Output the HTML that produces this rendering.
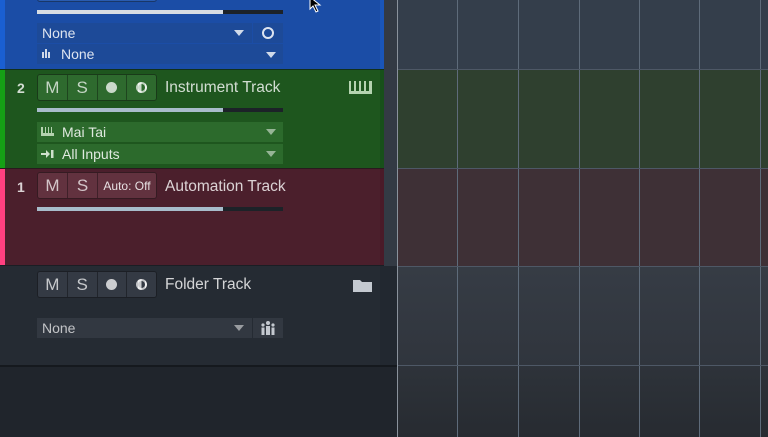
<!DOCTYPE html>
<html><head><meta charset="utf-8"><style>
*{margin:0;padding:0;box-sizing:border-box}
body{width:768px;height:437px;overflow:hidden;background:#22272e;font-family:"Liberation Sans",sans-serif;position:relative}
.a{position:absolute}
.btns{position:absolute;left:37px;height:27px;width:120px;border:1px solid rgba(0,0,0,.45);border-radius:3px;display:flex;overflow:hidden}
.btns div{flex:1;border-right:1px solid rgba(0,0,0,.35);display:flex;align-items:center;justify-content:center;color:rgba(255,255,255,.72);font-size:17px}
.btns div:last-child{border-right:none}
.dot{width:11px;height:11px;border-radius:50%;background:rgba(255,255,255,.75)}
.half{width:11px;height:11px;border-radius:50%;border:2px solid rgba(255,255,255,.7);background:linear-gradient(90deg,rgba(255,255,255,.75) 50%,transparent 50%)}
.fader{position:absolute;left:37px;width:246px;height:4px;background:#1c2228}
.fader i{position:absolute;left:0;top:0;height:4px;width:186px;background:#a8bccb}
.name{position:absolute;left:165px;font-size:15.5px;color:rgba(255,255,255,.8)}
.num{position:absolute;left:17px;font-size:14px;font-weight:bold;color:rgba(255,255,255,.8)}
.dd{position:absolute;left:37px;width:246px;height:20px;font-size:14px;color:rgba(255,255,255,.85);padding-left:5px;line-height:20px}
.tri{position:absolute;width:0;height:0;border-left:5px solid transparent;border-right:5px solid transparent;border-top:6px solid rgba(255,255,255,.8)}
.vl{position:absolute;top:0;width:1px;height:437px;background:#5e6b7a}
.hl{position:absolute;left:398px;width:370px;height:1px;background:#4e5866}
</style></head><body>
<div class="a" style="left:0;top:0;width:384px;height:69px;background:#1b4da6"></div>
<div class="a" style="left:0;top:0;width:5px;height:69px;background:#1a5fd2"></div>
<div class="a" style="left:0;top:69px;width:384px;height:100px;background:#1e561e;border-top:1px solid #12301a"></div>
<div class="a" style="left:0;top:70px;width:5px;height:98px;background:#15a015"></div>
<div class="a" style="left:0;top:168px;width:384px;height:98px;background:#4b1f2c;border-top:1px solid #2a1a1e"></div>
<div class="a" style="left:0;top:169px;width:5px;height:96px;background:#ff4080"></div>
<div class="a" style="left:0;top:265px;width:384px;height:100px;background:#252b33;border-top:1px solid #1a1e24"></div>
<div class="a" style="left:0;top:365px;width:397px;height:72px;background:#20252c;border-top:2px solid #15191e"></div>
<div class="a" style="left:380px;top:0;width:4px;height:69px;background:#1a55b8"></div>
<div class="a" style="left:380px;top:70px;width:4px;height:98px;background:#17501a"></div>
<div class="a" style="left:380px;top:169px;width:4px;height:96px;background:#4a1a28"></div>
<div class="a" style="left:384px;top:0;width:13px;height:365px;background:#333a44"></div>
<div class="a" style="left:380px;top:266px;width:17px;height:99px;background:#222830"></div>
<div class="a" style="left:398px;top:0;width:370px;height:69px;background:#343e4b"></div>
<div class="a" style="left:398px;top:69px;width:370px;height:99px;background:#2f402f"></div>
<div class="a" style="left:398px;top:168px;width:370px;height:98px;background:#3e3036"></div>
<div class="a" style="left:398px;top:266px;width:370px;height:99px;background:linear-gradient(#363c45,#30353d)"></div>
<div class="a" style="left:398px;top:365px;width:370px;height:72px;background:linear-gradient(#2e333a,#272b31)"></div>
<div class="vl" style="left:397px;background:#8a929c"></div>
<div class="vl" style="left:457px"></div><div class="vl" style="left:518px"></div><div class="vl" style="left:579px"></div><div class="vl" style="left:639px"></div><div class="vl" style="left:699px"></div><div class="vl" style="left:760px"></div>
<div class="hl" style="top:69px"></div><div class="hl" style="top:168px"></div><div class="hl" style="top:266px"></div><div class="hl" style="top:365px"></div>

<div class="a" style="left:37px;top:-6px;width:120px;height:8px;border:1px solid rgba(0,0,0,.4);border-radius:3px;background:#2a5cb0"></div>
<div class="fader" style="top:10px"><i style="background:#d8dde3"></i></div>
<div class="dd" style="top:23px;width:215px;background:#1d4a98">None</div>
<div class="tri" style="left:234px;top:30px"></div>
<div class="a" style="left:253px;top:23px;width:30px;height:20px;background:#1d4a98"></div>
<div class="a" style="left:262px;top:27px;width:12px;height:12px;border-radius:50%;border:2px solid rgba(255,255,255,.85)"></div>
<div class="dd" style="top:44px;background:#1d4a98;padding-left:24px">None</div>
<svg class="a" style="left:42px;top:49px" width="10" height="9"><rect x="0" y="3" width="2" height="6" fill="#cfd8e8"/><rect x="3" y="0" width="2" height="9" fill="#cfd8e8"/><rect x="6" y="3" width="2" height="6" fill="#cfd8e8"/></svg>
<div class="tri" style="left:266px;top:52px"></div>
<svg class="a" style="left:309px;top:-4px" width="18" height="18"><path d="M1 1 L1 13 L4 10 L7 16 L9 15 L6 9 L11 9 Z" fill="#000" stroke="#fff" stroke-width="1"/></svg>

<div class="num" style="top:80px">2</div>
<div class="btns" style="top:74px;background:#2e6a2e"><div>M</div><div>S</div><div><span class="dot"></span></div><div><span class="half"></span></div></div>
<div class="name" style="top:79px">Instrument Track</div>
<svg class="a" style="left:349px;top:81px" width="23" height="13"><path d="M0 0h2v10h3V0h2v10h3V0h2v10h3V0h2v10h3V0h3v13H0z" fill="#b5d3b0"/></svg>
<div class="fader" style="top:108px"><i></i></div>
<div class="dd" style="top:122px;background:#2c6a2c;padding-left:25px">Mai Tai</div>
<svg class="a" style="left:41px;top:127px" width="13" height="9"><path d="M0 0h2v6h2V0h1v6h2V0h1v6h2V0h1v6h2V0h0v9H0z" fill="#b5d3b0"/></svg>
<div class="tri" style="left:266px;top:129px;border-top-color:rgba(255,255,255,.5)"></div>
<div class="dd" style="top:144px;background:#2c6a2c;padding-left:25px">All Inputs</div>
<svg class="a" style="left:41px;top:149px" width="13" height="10"><path d="M0 4h5V1l4 4-4 4V6H0z" fill="#cfe0cc"/><rect x="10" y="1" width="2.5" height="8" fill="#cfe0cc"/></svg>
<div class="tri" style="left:266px;top:151px;border-top-color:rgba(255,255,255,.5)"></div>

<div class="num" style="top:179px">1</div>
<div class="btns" style="top:172px;background:#62323f"><div style="flex:0 0 30px">M</div><div style="flex:0 0 30px">S</div><div style="font-size:12px;color:rgba(255,255,255,.85)">Auto: Off</div></div>
<div class="name" style="top:178px">Automation Track</div>
<div class="fader" style="top:207px"><i></i></div>

<div class="btns" style="top:271px;background:#343a44"><div>M</div><div>S</div><div><span class="dot"></span></div><div><span class="half"></span></div></div>
<div class="name" style="top:276px">Folder Track</div>
<svg class="a" style="left:353px;top:279px" width="19" height="13"><path d="M0 1h7l2 2h10v10H0z" fill="#c4c9d0"/></svg>
<div class="dd" style="top:318px;width:215px;background:#323841;color:rgba(255,255,255,.7)">None</div>
<div class="tri" style="left:234px;top:325px;border-top-color:rgba(255,255,255,.5)"></div>
<div class="a" style="left:253px;top:318px;width:30px;height:20px;background:#323841"></div>
<svg class="a" style="left:260px;top:321px" width="16" height="14"><circle cx="8" cy="2" r="2" fill="#c4c9d0"/><circle cx="3" cy="4" r="1.6" fill="#c4c9d0"/><circle cx="13" cy="4" r="1.6" fill="#c4c9d0"/><rect x="6" y="5" width="4" height="9" fill="#c4c9d0"/><rect x="1.5" y="6.5" width="3" height="7.5" fill="#c4c9d0"/><rect x="11.5" y="6.5" width="3" height="7.5" fill="#c4c9d0"/></svg>
</body></html>
